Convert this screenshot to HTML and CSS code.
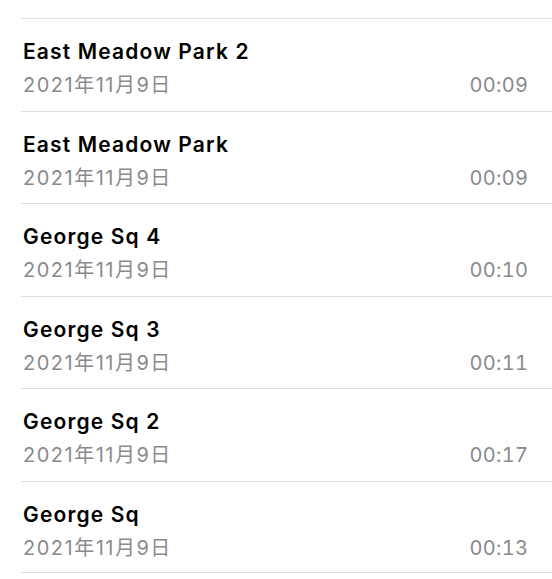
FILE: index.html
```html
<!DOCTYPE html>
<html lang="en">
<head>
    <meta charset="UTF-8">
    <meta name="viewport" content="width=device-width, initial-scale=1.0">
    <title>Recordings</title>
    <link rel="stylesheet" href="styles.css">
</head>
<body>
    <ul class="recordings">
        <li class="recording">
            <div class="recording-title">East Meadow Park 2</div>
            <div class="recording-meta"><span class="recording-date">2021年11月9日</span><span class="recording-length">00:09</span></div>
        </li>
        <li class="recording">
            <div class="recording-title">East Meadow Park</div>
            <div class="recording-meta"><span class="recording-date">2021年11月9日</span><span class="recording-length">00:09</span></div>
        </li>
        <li class="recording">
            <div class="recording-title">George Sq 4</div>
            <div class="recording-meta"><span class="recording-date">2021年11月9日</span><span class="recording-length">00:10</span></div>
        </li>
        <li class="recording">
            <div class="recording-title">George Sq 3</div>
            <div class="recording-meta"><span class="recording-date">2021年11月9日</span><span class="recording-length">00:11</span></div>
        </li>
        <li class="recording">
            <div class="recording-title">George Sq 2</div>
            <div class="recording-meta"><span class="recording-date">2021年11月9日</span><span class="recording-length">00:17</span></div>
        </li>
        <li class="recording last">
            <div class="recording-title">George Sq</div>
            <div class="recording-meta"><span class="recording-date">2021年11月9日</span><span class="recording-length">00:13</span></div>
        </li>
    </ul>
</body>
</html>
```

FILE: styles.css
```css
body {
    margin: 0;
    background-color: #ffffff;
    font-family: "Inter", "Noto Sans CJK SC", sans-serif;
    overflow: hidden;
}

.recordings {
    list-style: none;
    margin: 18px 0 0 21px;
    padding: 0;
}

.recording {
    box-sizing: border-box;
    height: 92.5px;
    border-top: 1px solid #e0e0e2;
    padding: 19px 24px 0 2px;
}

.recording.last {
    border-bottom: 1px solid #e0e0e2;
}

.recording-title {
    font-size: 21px;
    font-weight: 600;
    letter-spacing: 1.15px;
    color: #000000;
    line-height: 28px;
}

.recording-meta {
    display: flex;
    justify-content: space-between;
    margin-top: 4px;
    font-size: 20px;
    color: #8a8a8e;
    line-height: 30px;
}

.recording-date {
    letter-spacing: 1.5px;
}

.recording-length {
    font-variant-numeric: tabular-nums;
    letter-spacing: 0.3px;
    margin-right: -0.3px;
}
```
